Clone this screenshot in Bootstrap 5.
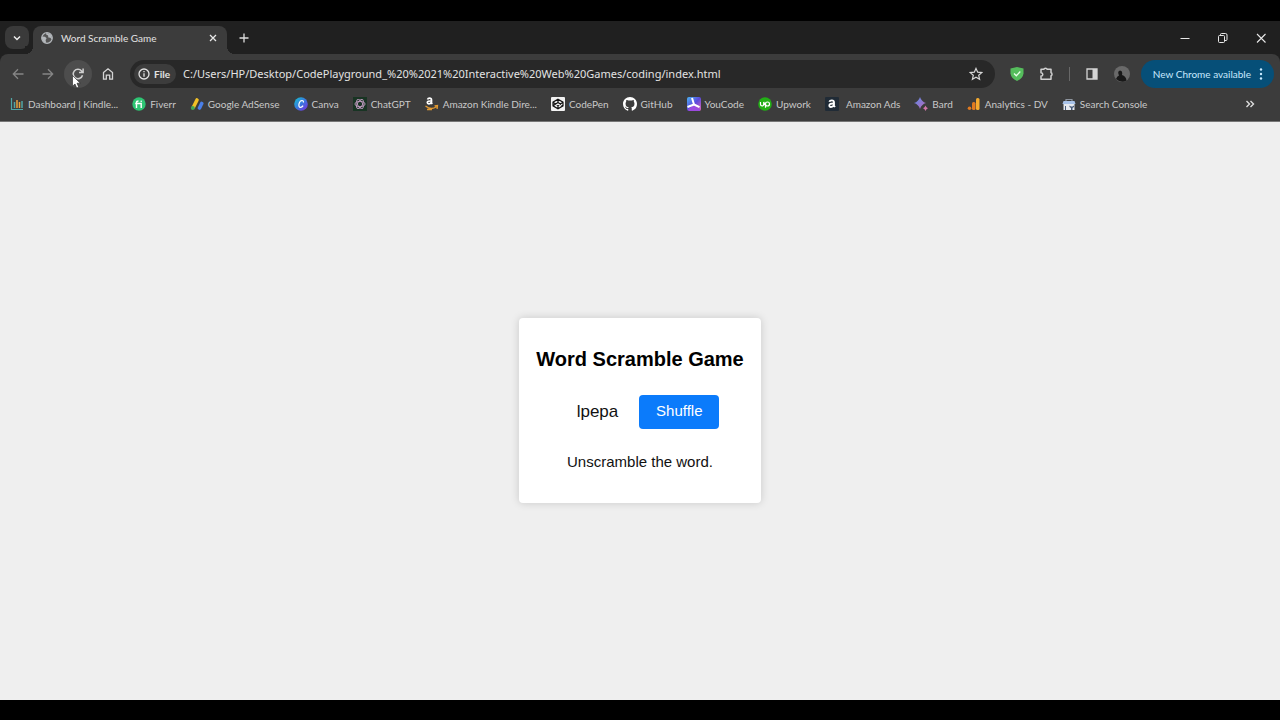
<!DOCTYPE html>
<html lang="en">
<head>
<meta charset="utf-8">
<meta name="viewport" content="width=device-width, initial-scale=1">
<title>Word Scramble Game</title>
<link href="https://cdn.jsdelivr.net/npm/bootstrap@5.3.0/dist/css/bootstrap.min.css" rel="stylesheet">
<style>
  body { background: #000; font-family: Lato, "Noto Sans", sans-serif; font-size: 10px; line-height: 16px; color: #e3e3e3; }
  .screen { padding: 21px 0 20px; }
  svg { display: block; flex: none; }
  button { color: inherit; }
  .plain { background: none; border: 0; padding: 0; display: flex; align-items: center; justify-content: center; flex: none; }

  .tab-strip { background: #202020; height: 33px; padding: 5px 0 0 5px; }
  .tab-search { width: 24px; height: 23px; border-radius: 8px; background: #3a3a3a; }
  .page-tab { width: 194px; height: 28px; margin-left: 4px; padding: 0 8px 4px; background: #3c3c3c; border-radius: 8px 8px 0 0; position: relative; }
  .page-tab::before, .page-tab::after { content: ""; position: absolute; bottom: 0; width: 8px; height: 8px; }
  .page-tab::before { left: -8px; background: radial-gradient(circle at 0 0, #202020 8px, #3c3c3c 8px); }
  .page-tab::after { right: -8px; background: radial-gradient(circle at 100% 0, #202020 8px, #3c3c3c 8px); }
  .win-btn { width: 38px; height: 24px; }
  .new-tab { width: 34px; height: 24px; }

  .toolbar-back { background: #202020; }
  .toolbar { background: #3c3c3c; height: 39px; padding: 0 6px 0 3px; border-radius: 8px 8px 0 0; }
  .nav-btn { width: 30px; height: 28px; border-radius: 50%; }
  .nav-btn.hovered { background: #4d4d4d; width: 28px; margin: 0 1px; position: relative; }
  .nav-btn.off { color: #858585; }
  .pointer { position: absolute; left: 8px; top: 15px; pointer-events: none; }
  .omnibox { height: 28px; margin-left: 7px; padding: 0 12px 0 4px; background: #282828; border-radius: 14px; }
  .file-chip { height: 20px; padding: 0 6px 0 4px; border-radius: 10px; background: #3c3c3c; font-weight: 700; }
  .address { font-family: "Noto Sans", sans-serif; font-size: 11px; line-height: 16px; color: #e3e3e3; background: none; border: 0; outline: 0; padding: 0; margin-left: 7px; min-width: 0; }
  .tool-icons { gap: 15px; margin: 0 11px 0 15px; }
  .bar-sep { width: 1px; height: 14px; background: #686868; }
  .update { height: 28px; padding: 0 7px 0 12px; border-radius: 14px; background: #064f78; color: #c8e9ff; gap: 4px; }

  .bookmarks { background: #3c3c3c; height: 29px; padding: 0 24px 6px 10px; gap: 14px; border-bottom: 1px solid #777; }
  .bookmarks a { display: flex; align-items: center; gap: 4px; color: #c9c9c9; text-decoration: none; white-space: nowrap; }
  .bookmarks a.spaced { gap: 7px; }

  .page { background: #efefef; padding-bottom: 2px; }
  .game { font-family: "Liberation Sans", Arial, sans-serif; font-size: 15px; line-height: 18px; color: #111; background: #fff; border-radius: 4px; padding: 31px 17px 32px; box-shadow: 0 0 9px rgba(0,0,0,.16); }
  .game h1 { font-size: 20px; line-height: 20px; font-weight: 700; margin: 0 0 26px; color: #000; }
  .game .scrambled { font-size: 17px; margin: 0 21px 0 16px; }
  .game .shuffle { width: 80px; height: 34px; padding: 0 0 2px; border-radius: 4px; background: #0b7bfb; border: 0; color: #fff; font-size: 15px; line-height: 18px; }
  .game .hint { margin: 24px 0 0; }
</style>
</head>
<body>
<div class="screen min-vh-100 d-flex flex-column">
  <header>
    <div class="tab-strip d-flex align-items-start">
      <button class="plain tab-search" aria-label="Search tabs"><svg width="10" height="10" viewBox="0 0 10 10" fill="none" stroke="#eee" stroke-width="1.5"><path d="M2 3.500l3 3 3-3"/></svg></button>
      <div class="page-tab d-flex align-items-center">
        <svg width="12" height="12" viewBox="0 0 12 12"><circle cx="6" cy="6" r="5.300" fill="#555" stroke="#b4b8bc" stroke-width="1.200"/><path d="M1 4.500l3 .3 1.600 1.500L4.600 8l.6 3A5.400 5.400 0 0 1 1 4.500zM5.300 1l-.2 1.600 2 .8.2 2 2 .4 1.500 1.800A5.300 5.300 0 0 0 5.300 1z" fill="#b4b8bc"/></svg>
        <span class="ms-2 flex-grow-1 text-nowrap">Word Scramble Game</span>
        <button class="plain" aria-label="Close tab"><svg width="12" height="12" viewBox="0 0 12 12" stroke="#e8e8e8" stroke-width="1.300"><path d="M3 3l6 6M9 3l-6 6"/></svg></button>
      </div>
      <button class="plain new-tab me-auto" aria-label="New tab"><svg width="12" height="12" viewBox="0 0 12 12" stroke="#ddd" stroke-width="1.300"><path d="M6 1.500v9M1.500 6h9"/></svg></button>
      <button class="plain win-btn" aria-label="Minimize"><svg width="12" height="12" viewBox="0 0 12 12" stroke="#e8e8e8"><path d="M1.500 6.500h9"/></svg></button>
      <button class="plain win-btn" aria-label="Restore"><svg width="12" height="12" viewBox="0 0 12 12" stroke="#e8e8e8" fill="none"><rect x="1.500" y="3.500" width="6" height="7" rx="1"/><path d="M3.500 3.300V2.500q0-1 1-1h4q1.500 0 1.500 1.500v4.500q0 1-1 1H8"/></svg></button>
      <button class="plain win-btn" aria-label="Close"><svg width="12" height="12" viewBox="0 0 12 12" stroke="#e8e8e8" stroke-width="1.100"><path d="M2 2l8.500 8.500M10.500 2L2 10.500"/></svg></button>
    </div>
    <div class="toolbar-back">
      <div class="toolbar d-flex align-items-center">
        <button class="plain nav-btn off" aria-label="Back"><svg width="14" height="14" viewBox="0 0 14 14" fill="none" stroke="currentColor" stroke-width="1.300"><path d="M12.500 7h-10M7 2.300L2.300 7 7 11.700"/></svg></button>
        <button class="plain nav-btn off" aria-label="Forward"><svg width="14" height="14" viewBox="0 0 14 14" fill="none" stroke="currentColor" stroke-width="1.300"><path d="M1.500 7h10M7 2.300L11.700 7 7 11.700"/></svg></button>
        <button class="plain nav-btn hovered" aria-label="Reload"><svg width="14" height="14" viewBox="0 0 14 14" fill="none" stroke="#d0d0d0" stroke-width="1.500"><path d="M11.500 8.200A4.700 4.700 0 1 1 10.600 4L12 5.500M12.100 1.500v4H8"/></svg><svg class="pointer" width="9" height="14" viewBox="0 0 9 14"><path d="M.5.500v10.700L3 9l1.700 4 2-.9L5 8.200h3.300z" fill="#fff" stroke="#222" stroke-width=".6"/></svg></button>
        <button class="plain nav-btn" aria-label="Home"><svg width="14" height="14" viewBox="0 0 14 14" fill="none" stroke="#d4d4d4" stroke-width="1.300"><path d="M2.500 5.500L7 1.800l4.500 3.700v6.700H8.700V8.200H5.300v4H2.500z"/></svg></button>
        <div class="omnibox d-flex align-items-center flex-grow-1">
          <button class="plain file-chip"><svg width="12" height="12" viewBox="0 0 12 12"><circle cx="6" cy="6" r="5" fill="none" stroke="#e3e3e3" stroke-width="1.300"/><path d="M6 5.300v3.500M6 3v1.300" stroke="#e3e3e3" stroke-width="1.300"/></svg><span class="ms-1">File</span></button>
          <input class="address flex-grow-1" aria-label="Address" value="C:/Users/HP/Desktop/CodePlayground_%20%2021%20Interactive%20Web%20Games/coding/index.html">
          <button class="plain" aria-label="Bookmark this page"><svg width="14" height="14" viewBox="0 0 14 14" fill="none" stroke="#d8d8d8" stroke-width="1.200"><path d="M7 1.400l1.700 3.800 4.100.4-3.100 2.700.9 4L7 10.200l-3.600 2.100.9-4L1.200 5.600l4.100-.4z"/></svg></button>
        </div>
        <div class="tool-icons d-flex align-items-center">
          <button class="plain" aria-label="Security extension"><svg width="14" height="14" viewBox="0 0 14 14"><path d="M7 0l6.500 1.500v5Q13 11 7 14 1 11 .5 6.500v-5z" fill="#55bd5c"/><path d="M4 6.500l2.300 2.300L10.300 4.500" stroke="#e8ffe8" stroke-width="1.300" fill="none"/></svg></button>
          <button class="plain" aria-label="Extensions"><svg width="15" height="14" viewBox="0 0 15 14" fill="none" stroke="#d0d0d0" stroke-width="1.500" stroke-linejoin="round"><path d="M2 2.300h3a1.500 1 0 0 1 3 0h4v3.400a1 1.500 0 0 1 0 3v3.600H2V9.100q1.800-.2 1.800-1.700T2 5.700z"/></svg></button>
          <div class="bar-sep"></div>
          <button class="plain" aria-label="Side panel"><svg width="14" height="14" viewBox="0 0 14 14"><path d="M2 2h10v10H2z" fill="none" stroke="#d4d4d4" stroke-width="1.300"/><path d="M7.500 2H12v10H7.500z" fill="#d4d4d4"/></svg></button>
          <button class="plain" aria-label="Profile"><svg width="16" height="16" viewBox="0 0 16 16"><circle cx="8" cy="8" r="8" fill="#696969"/><path d="M2 13q1-3 3-3.500Q3 5 6 4.500 9 4.500 8 9q4 1 4.500 5.500Q7 17.500 2 13z" fill="#181818"/></svg></button>
        </div>
        <button class="plain update text-nowrap"><span>New Chrome available</span><svg width="12" height="12" viewBox="0 0 12 12" fill="#c8e9ff"><circle cx="6" cy="1.500" r="1.200"/><circle cx="6" cy="6" r="1.200"/><circle cx="6" cy="10.500" r="1.200"/></svg></button>
      </div>
    </div>
    <nav class="bookmarks d-flex align-items-center" aria-label="Bookmarks">
      <a href="#"><svg width="14" height="14" viewBox="0 0 14 14" fill="none" stroke-width="1.500"><path d="M1.500 1v11.500H13" stroke="#4fa5a5" stroke-width="1.200"/><path d="M4.500 5v6M12 4v7" stroke="#4fa5a5"/><path d="M7 3v8M9.500 5v6" stroke="#e6a03c"/></svg><span>Dashboard | Kindle...</span></a>
      <a href="#"><svg width="14" height="14" viewBox="0 0 14 14"><circle cx="7" cy="7" r="6.700" fill="#2ec573"/><path d="M4.500 11V5.500Q4.500 4 6.500 4M3.200 6.500h6V11" fill="none" stroke="#fff" stroke-width="1.400"/><circle cx="9.200" cy="4.300" r=".8" fill="#fff"/></svg><span>Fiverr</span></a>
      <a href="#"><svg width="14" height="14" viewBox="0 0 14 14" stroke-linecap="round" stroke-width="3.600"><path d="M11.700 6.500L9.500 11" stroke="#4a7fe8"/><path d="M7 3L3.500 10" stroke="#f2c026"/><circle cx="2.800" cy="11" r="2" fill="#43a557"/></svg><span>Google AdSense</span></a>
      <a href="#"><svg width="14" height="14" viewBox="0 0 14 14"><defs><linearGradient id="cv" x1="0" y1="0" x2="1" y2="1"><stop offset="0" stop-color="#12c5cf"/><stop offset=".5" stop-color="#3978df"/><stop offset="1" stop-color="#8126dc"/></linearGradient></defs><circle cx="7" cy="7" r="6.800" fill="url(#cv)"/><path d="M9.300 5.500q.5-2-1.300-2-2.200.2-3 3.300-.6 3.500 1.600 3.600 1.400 0 2.500-1.700" fill="none" stroke="#fff" stroke-width="1.200"/></svg><span>Canva</span></a>
      <a href="#"><svg width="14" height="14" viewBox="0 0 14 14"><path d="M0 0h14v14H0z" fill="#183423"/><g fill="none" stroke="#c09bc0" stroke-width=".9"><ellipse cx="7" cy="7" rx="5" ry="2.600"/><ellipse cx="7" cy="7" rx="5" ry="2.600" transform="rotate(60 7 7)"/><ellipse cx="7" cy="7" rx="5" ry="2.600" transform="rotate(120 7 7)"/></g></svg><span>ChatGPT</span></a>
      <a href="#"><svg width="14" height="14" viewBox="0 0 14 14" fill="none"><path d="M2.500 2.500Q3 1.200 4.500 1.200q2 0 2 1.800v3.200l.8.800M6.300 4q-4-.2-4 1.600 0 1.200 1.500 1.200 1.700 0 2.500-1.500" stroke="#fff" stroke-width="1.700"/><path d="M.5 9q5.500 4.500 11 .8M9.500 8.800l3-.3-.4 3.500M2 12.500h5" stroke="#e39a31" stroke-width="1.300"/></svg><span>Amazon Kindle Dire...</span></a>
      <a href="#"><svg width="14" height="14" viewBox="0 0 14 14"><rect width="14" height="14" rx="1" fill="#f2f2f2"/><path d="M7 2.200l5 3v3.600l-5 3-5-3V5.200zM2 5.200l5 3.300 5-3.300M2 8.800l5-3.300 5 3.300M7 2.200v3.300M7 8.500v3.300" fill="none" stroke="#111" stroke-width="1.200"/></svg><span>CodePen</span></a>
      <a href="#"><svg width="14" height="14" viewBox="0 0 16 16" fill="#fff"><path d="M8 0C3.580 0 0 3.580 0 8c0 3.540 2.290 6.530 5.470 7.590.4.070.55-.17.55-.38 0-.19-.01-.82-.01-1.490-2.010.37-2.530-.49-2.690-.94-.09-.23-.48-.94-.82-1.130-.28-.15-.68-.52-.01-.53.63-.01 1.080.58 1.230.82.72 1.210 1.870.87 2.330.66.07-.52.28-.87.51-1.070-1.780-.2-3.640-.89-3.640-3.950 0-.87.31-1.590.82-2.150-.08-.2-.36-1.020.08-2.120 0 0 .67-.21 2.200.82.64-.18 1.320-.27 2-.27s1.360.09 2 .27c1.530-1.040 2.200-.82 2.200-.82.44 1.100.16 1.920.08 2.120.51.56.82 1.270.82 2.150 0 3.070-1.870 3.750-3.650 3.950.29.25.54.73.54 1.480 0 1.070-.01 1.930-.01 2.200 0 .21.15.46.55.38A8.010 8.010 0 0 0 16 8c0-4.420-3.580-8-8-8z"/></svg><span>GitHub</span></a>
      <a href="#"><svg width="14" height="14" viewBox="0 0 14 14"><defs><linearGradient id="yc" x1="0" y1="0" x2="1" y2="1"><stop offset="0" stop-color="#4ab7f5"/><stop offset=".5" stop-color="#5b49dc"/><stop offset="1" stop-color="#e268b4"/></linearGradient></defs><rect width="14" height="14" rx="2" fill="url(#yc)"/><path d="M1 12.500L6.500 8 13 12V14H2z" fill="#9c4ade"/><path d="M5 1l2 6.500M7 7.500l5.500 2.700M7 7.500L.5 10" stroke="#fff" stroke-width="2"/></svg><span>YouCode</span></a>
      <a href="#"><svg width="14" height="14" viewBox="0 0 14 14"><circle cx="7" cy="7" r="6.800" fill="#22ae16"/><path d="M2.500 5v2.300q0 1.700 1.600 1.700t1.600-1.700V5q1 3 2.200 4M7.500 10.800V7q0-2 2-2t2 2-2 2-2-2" fill="none" stroke="#fff" stroke-width="1.200"/></svg><span>Upwork</span></a>
      <a href="#" class="spaced"><svg width="14" height="14" viewBox="0 0 14 14"><rect width="14" height="14" rx="1" fill="#202b36"/><path d="M4.300 4.800Q4.800 3.300 6.800 3.300q2.200 0 2.200 2v3.500l1 1.200M8.800 6.500q-4.500-.2-4.500 2 0 1.500 1.700 1.500Q8 10 8.800 8" fill="none" stroke="#fff" stroke-width="1.800"/></svg><span>Amazon Ads</span></a>
      <a href="#"><svg width="14" height="14" viewBox="0 0 14 14"><defs><linearGradient id="bd" x1="0" y1="0" x2="1" y2="1"><stop offset="0" stop-color="#5b8dea"/><stop offset="1" stop-color="#bb66b8"/></linearGradient></defs><path d="M6 0q1.500 4.700 6 6-4.500 1.300-6 6Q4.500 7.300 0 6q4.500-1.300 6-6z" fill="url(#bd)"/><path d="M11.500 8.500q.7 2 2.500 2.700-1.800.7-2.500 2.800-.7-2.100-2.500-2.800 1.800-.7 2.500-2.700z" fill="#d175a8"/></svg><span>Bard</span></a>
      <a href="#"><svg width="14" height="14" viewBox="0 0 14 14"><rect x="9" y="1" width="3.500" height="12" rx="1.500" fill="#f5ab30"/><rect x="5" y="5" width="3.500" height="8" rx="1.500" fill="#df7a20"/><circle cx="2.500" cy="11.200" r="1.800" fill="#df7a20"/></svg><span>Analytics - DV</span></a>
      <a href="#"><svg width="14" height="14" viewBox="0 0 14 14"><path d="M4 4V2.500h6V4" fill="none" stroke="#8d949d" stroke-width="1.200"/><path d="M1.500 4h11L13.500 7h-13z" fill="#a8c2e8"/><path d="M1.500 7h11v6h-11z" fill="#e6e9ee"/><path d="M7.500 8.500v1.500l1.500 1v2h1.500v-2L12 10V8.500l-1.500 1H9z" fill="#465a78"/><path d="M3.500 9v4" stroke="#465a78"/></svg><span>Search Console</span></a>
      <button class="plain ms-auto" aria-label="More bookmarks"><svg width="12" height="12" viewBox="0 0 12 12" fill="none" stroke="#ddd" stroke-width="1.400"><path d="M2.500 3l3 3-3 3M6.500 3l3 3-3 3"/></svg></button>
    </nav>
  </header>
  <main class="page flex-grow-1 d-flex align-items-center justify-content-center">
    <section class="game text-center">
      <h1>Word Scramble Game</h1>
      <div class="d-flex align-items-center justify-content-center"><span class="scrambled">lpepa</span><button class="shuffle">Shuffle</button></div>
      <p class="hint">Unscramble the word.</p>
    </section>
  </main>
</div>
<script src="https://cdn.jsdelivr.net/npm/bootstrap@5.3.0/dist/js/bootstrap.bundle.min.js"></script>
</body>
</html>
